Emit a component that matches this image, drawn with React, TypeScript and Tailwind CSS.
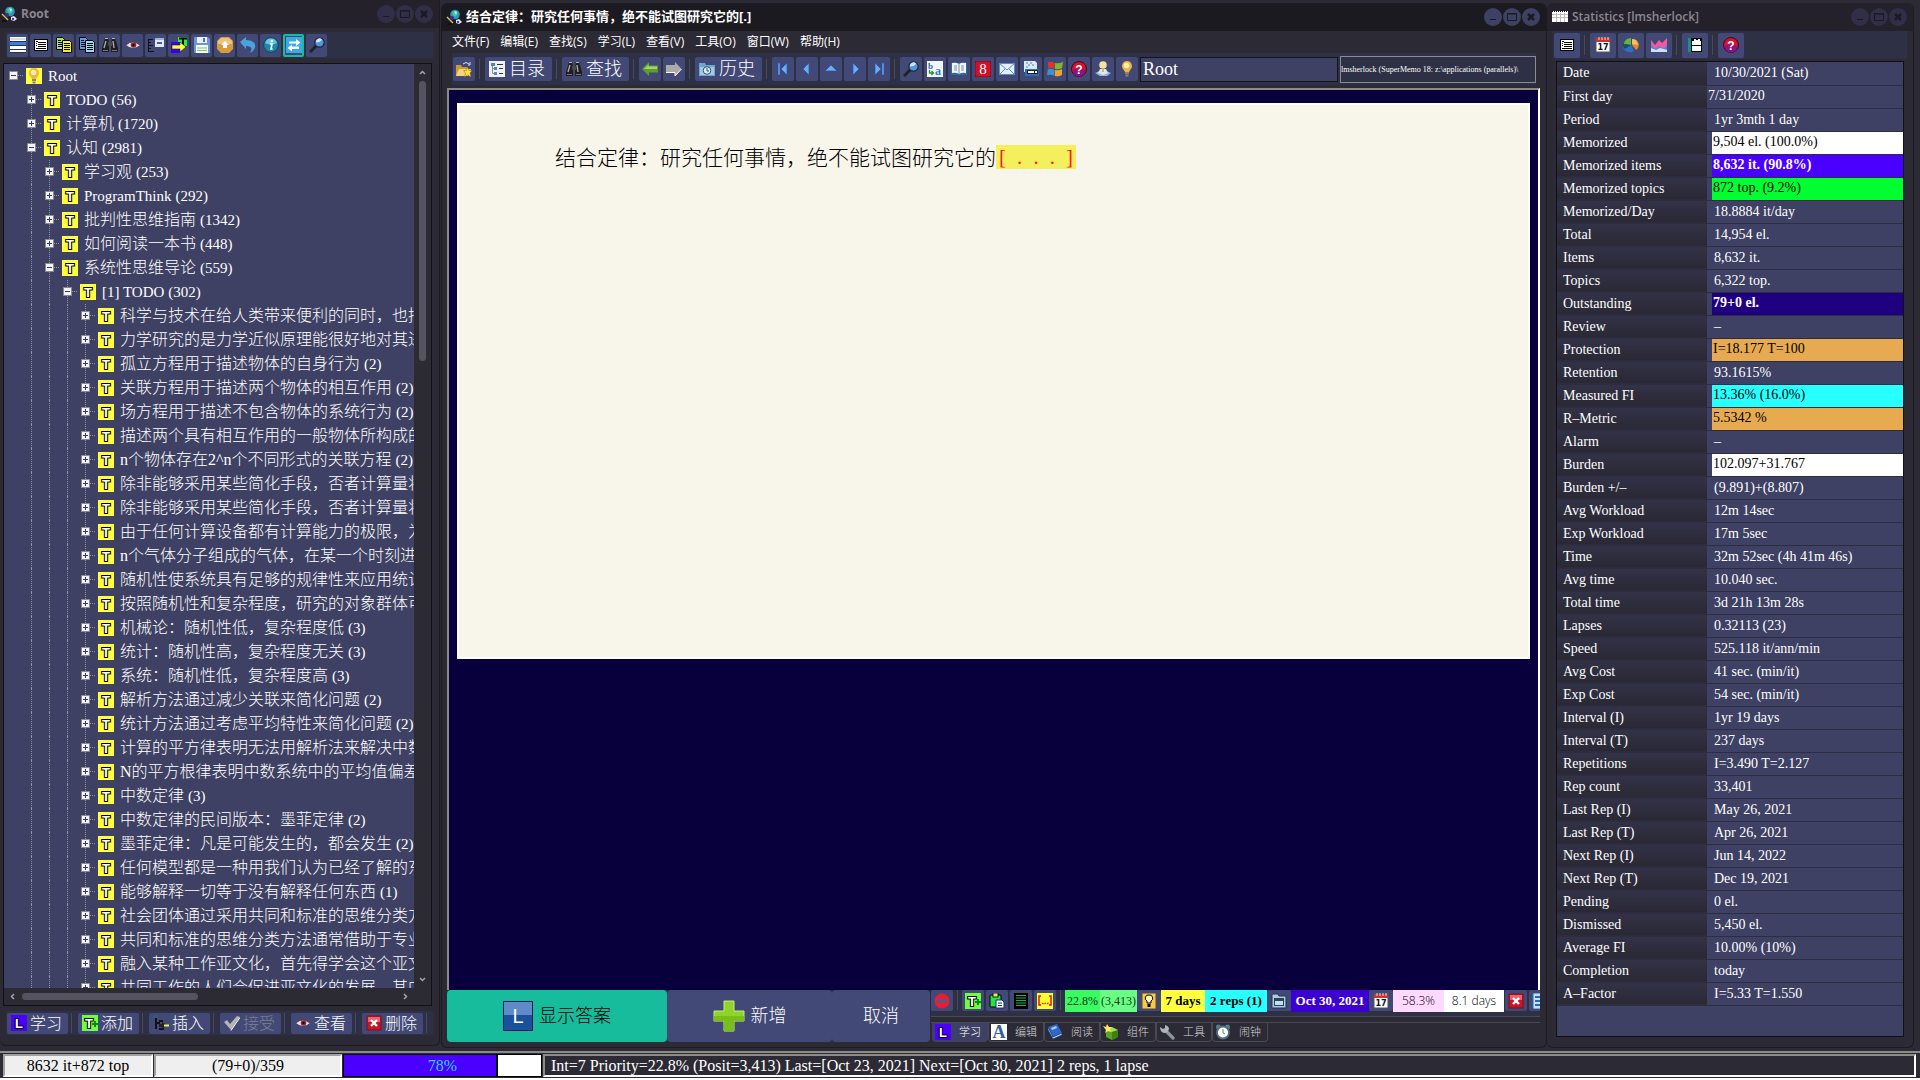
import React from 'react';
import clsx from 'clsx';

const SERIF = "font-['Liberation_Serif','Noto_Sans_CJK_SC',serif]";
const SANS = "font-['Open_Sans','Noto_Sans_CJK_SC',sans-serif]";

/*icons*/
const Svg = (props: { size?: number, children: React.ReactNode }) => (
    <svg width={props.size ?? 16} height={props.size ?? 16} viewBox="0 0 16 16" className="shrink-0" aria-hidden="true">
        {props.children}
    </svg>
);

const Letter = (props: { ch: string, bg: string, plus?: boolean }) => <Svg>
    <rect width="16" height="16" fill={props.bg}/>
    <text x={props.plus ? 7 : 8} y="12.6" textAnchor="middle" fontSize="13" fontWeight="bold"
          fontFamily="Liberation Sans, sans-serif" fill="#fff" stroke="#000" strokeWidth="2.2"
          paintOrder="stroke">{props.ch}</text>
    {props.plus && <path d="M13 6v6M10 9h6" stroke="#0a8a1a" strokeWidth="2"/>}
</Svg>;

const IconLogo = () => <Svg>
    <path d="M1 15h5M2 9l5 5" stroke="#111" strokeWidth="2"/>
    <path d="M1 8l6 6" stroke="#d9c94a" strokeWidth="1.4"/>
    <circle cx="9" cy="5.5" r="4.8" fill="#2a9bb5"/>
    <path d="M6 3l4-1 2 3-3 3-2-2z" fill="#43c59e"/>
    <path d="M8 2l3 1-1 3z" fill="#d8f0f4"/>
    <circle cx="6" cy="9" r="2" fill="#3b2b9a"/>
    <path d="M10 11l3-1 3 3-3 2-3-1z" fill="#eee"/>
    <circle cx="12" cy="13" r="1.3" fill="#3a3ae0"/>
</Svg>;

const IconRows = () => <Svg>
    <rect width="16" height="16" fill="#fff"/>
    <rect y="5" width="16" height="3" fill="#3f7be0"/>
    <path d="M0 4.5h16M0 8.5h16M0 12.5h16M0 15.5h16" stroke="#28324f"/>
    <rect y="1" width="16" height="2" fill="#cfdcf4"/>
</Svg>;

const IconDoc = () => <Svg>
    <rect x="1.5" y="2.5" width="13" height="11" fill="#fff" stroke="#000"/>
    <path d="M3 4.5h2M5 5.5h8M5 7.5h8M5 9.5h8M3 11.5h10M3 6.5h1M3 8.5h1" stroke="#000"/>
</Svg>;

const IconDocs = (props: { a: string, b: string }) => <Svg>
    <path d="M.5 .5h6l2 2v10h-8z" fill={props.a} stroke="#000"/>
    <path d="M2 3.5h3M2 5.5h4M2 7.5h4M2 9.5h4" stroke="#000"/>
    <path d="M6.5 3.5h7l2 2v10h-9z" fill={props.b} stroke="#000"/>
    <path d="M8 6.5h6M8 8.5h6M8 10.5h6M8 12.5h6" stroke="#000"/>
</Svg>;

const IconBinoculars = () => <Svg>
    <path d="M3 1h3l1 4v10H0v-4z" fill="#1e1e1e"/>
    <path d="M13 1h-3L9 5v10h7v-4z" fill="#1e1e1e"/>
    <rect x="6" y="5" width="4" height="4" fill="#4a4a4a"/>
    <path d="M4 4l-2 7M11 4l1 7" stroke="#a8a8a8" strokeWidth="1.4"/>
    <path d="M3 1.5h3M10 1.5h3" stroke="#b5b5b5"/>
    <path d="M1 13.5h5M10 13.5h5" stroke="#777"/>
</Svg>;

const IconEye = () => <Svg>
    <path d="M1 8q6-6 14 0q-7 6-14 0z" fill="#e8e2e0"/>
    <path d="M1 8q6-6 14 0" stroke="#6a3d44" fill="none"/>
    <circle cx="8.5" cy="8" r="2.8" fill="#8c2d3c"/>
    <circle cx="8.5" cy="8" r="1.2" fill="#1a0509"/>
</Svg>;

const IconTreeWin = () => <Svg>
    <path d="M0 2.5h5M0 5.5h3M0 8.5h5M0 11.5h3M0 14.5h6M.5 2v12" stroke="#111" fill="none"/>
    <rect x="7" y="1" width="9" height="9" fill="#dfe6f5"/>
    <rect x="7" y="1" width="9" height="2" fill="#9db2dd"/>
    <path d="M9 6h5" stroke="#223" strokeWidth="1.4"/>
</Svg>;

const IconImportT = () => <Svg>
    <rect x="7" y="0" width="9" height="9" fill="#23ef3c"/>
    <path d="M8 1.5h8M12 1v7" stroke="#000" strokeWidth="2"/>
    <rect x="0" y="5" width="9" height="11" fill="#3b00f0"/>
    <path d="M1 8h8V5l6 5-6 5v-3H1z" fill="#ffff30" stroke="#222" strokeWidth=".6"/>
</Svg>;

const IconFloppy = () => <Svg>
    <path d="M0 0h14l2 2v14H0z" fill="#6b93d6"/>
    <rect x="3" y="0" width="10" height="6" fill="#e9f0fb"/>
    <rect x="9" y="1" width="2" height="4" fill="#4c70b5"/>
    <rect x="2" y="8" width="12" height="8" fill="#f4fbf0"/>
    <path d="M3 11h10M3 13.5h10" stroke="#7cc66a"/>
</Svg>;

const IconUp = () => <Svg>
    <path d="M4 0h8l4 4v8l-4 4H4l-4-4V4z" fill="#d79b3e"/>
    <path d="M4 1h8l3 3v3H1V4z" fill="#edc27a"/>
    <path d="M8 4l4 4h-2v3H6V8H4z" fill="#fff"/>
</Svg>;

const IconUndo = () => <Svg>
    <path d="M0 5l6-5v3c6 0 10 3 9 7-.5 3-3 5-5 6 2-3 3-7-4-7v3z" fill="#4aa3dd"/>
</Svg>;

const IconInfo = () => <Svg>
    <circle cx="8" cy="8" r="7.4" fill="#1f86a8" stroke="#0e4560"/>
    <path d="M2 6a6.3 6.3 0 0 1 12 0q-6 3-12 0z" fill="#6cc4dc"/>
    <circle cx="8.8" cy="4" r="1.2" fill="#fff"/>
    <path d="M7 7h2l-1 5h1.6" stroke="#fff" strokeWidth="1.6" fill="none"/>
</Svg>;

const IconSwap = () => <Svg>
    <rect width="16" height="16" fill="#3aa9e6"/>
    <path d="M3 4.5h7V2l4.500 3.500L10 9V6.500H3z" fill="#fff"/>
    <path d="M13 9.500H6V7.500L1.500 11 6 14.500V12h7z" fill="#fff"/>
</Svg>;

const IconZoom = () => <Svg>
    <path d="M1 15l6-6" stroke="#222" strokeWidth="3"/>
    <circle cx="10.5" cy="5.5" r="4.7" fill="#4f97dc" stroke="#1d2433" strokeWidth="1.2"/>
    <path d="M7 5.5a3.500 3.500 0 0 1 6-3q-1 3-6 3z" fill="#cfe6fb"/>
</Svg>;

const IconBulb = (props: { bg?: string }) => <Svg>
    {props.bg && <rect width="16" height="16" fill={props.bg}/>}
    <path d="M8 0a5 5 0 0 1 3.500 8.500L10 11H6L4.500 8.500A5 5 0 0 1 8 0z" fill="#efb73e"/>
    <circle cx="7.5" cy="4.5" r="2.8" fill="#fff0b0"/>
    <path d="M6 12h4M6.5 14.500h3" stroke="#8b8470" strokeWidth="1.8"/>
</Svg>;

const IconInsert = () => <Svg>
    <path d="M3 2v12M3 8h4" stroke="#111" strokeWidth="2"/>
    <rect x="0" y="0" width="5" height="3" fill="#36577e"/>
    <path d="M6 6h4M6 14h5" stroke="#111" strokeWidth="2"/>
    <path d="M6 9h3V7l5 3.500-5 3V12H6z" fill="#222"/>
    <path d="M11 10.500h5" stroke="#f0f060" strokeWidth="2"/>
</Svg>;

const IconCheck = () => <Svg>
    <path d="M0 7l3-2 3 4 7-8 3 1-9 13z" fill="#b5b5b5"/>
    <path d="M7 15.500l9-13" stroke="#fff"/>
</Svg>;

const IconRedX = () => <Svg>
    <rect x="1" y="1" width="14" height="14" fill="#c81525" stroke="#8a0c18"/>
    <rect x="2" y="2" width="12" height="5" fill="#e56570"/>
    <path d="M5 5l6 6M11 5l-6 6" stroke="#fff" strokeWidth="2.4"/>
</Svg>;

const IconFolderStar = () => <Svg>
    <path d="M0 4h5l1 2h6v9H0z" fill="#c99a35"/>
    <path d="M3 8h12l-3 7H0z" fill="#f6d577"/>
    <path d="M7 3q3-3 6 0M12 4h2V1" stroke="#dde" fill="none"/>
    <path d="M11.500 6l1.500 3.500H16l-2 2.500 1 4-3.500-2-3 2L9.500 12 7.500 9.500h3z" fill="#ffe23a" stroke="#8a6a10" strokeWidth=".5"/>
</Svg>;

const IconContents = () => <Svg>
    <rect width="16" height="16" fill="#eef1f4"/>
    <path d="M2 2h4v3H2zM5 6h3v3H5zM5 11h3v3H5z" fill="#4f86b8"/>
    <path d="M8 3.500h6M10 7.500h4M10 12.500h4" stroke="#333"/>
    <path d="M3.500 5v7.500h2M3.500 7.500h2" stroke="#888" fill="none"/>
</Svg>;

const IconArrow = (props: { right?: boolean }) => <Svg>
    {props.right
        ? <>
            <path d="M0 4h9V1l6.500 7L9 15v-4H0z" fill="#ababab"/>
            <path d="M0 11.500h9V15l6.500-7" stroke="#fff" fill="none"/>
        </>
        : <>
            <path d="M16 4.500H7V1L0 8l7 7v-3.500h9z" fill="#5aa02c"/>
            <path d="M15 5.500H6.500V3.500L2 8h13z" fill="#a2d66d"/>
        </>}
</Svg>;

const IconClockFolder = () => <Svg>
    <path d="M0 2h6l1 2h9v11H0z" fill="#6fa6cc"/>
    <rect x="1" y="6" width="14" height="8" fill="#a4cbe3"/>
    <circle cx="8" cy="9.5" r="3.8" fill="#dceaf3" stroke="#2c5474"/>
    <path d="M8 7v3h2" stroke="#2c5474" fill="none"/>
</Svg>;

const NAV_PATHS: Record<string, string> = {
    first: "M3 2h2v12H3zM12 2v12L6 8z",
    prev: "M10 2v12L4 8z",
    up: "M8 4l6 6H2z",
    next: "M6 2v12l6-6z",
    last: "M11 2h2v12h-2zM4 2v12l6-6z",
};

const IconNav = (props: { to: string }) => <Svg>
    <path d={NAV_PATHS[props.to]} fill="#6fabf2" stroke="#2458b4" strokeWidth=".7"/>
</Svg>;

const IconTranslate = () => <Svg>
    <rect width="16" height="16" fill="#f2f6fa"/>
    <text x="1" y="8" fontSize="9" fontWeight="bold" fontFamily="Liberation Serif" fill="#2b6ea8">b</text>
    <text x="8" y="14" fontSize="12" fontWeight="bold" fontFamily="Liberation Serif" fill="#2b7fc4">a</text>
    <path d="M2.500 9v3h4M4.500 10l2 2-2 2" stroke="#23902b" strokeWidth="1.3" fill="none"/>
</Svg>;

const IconBook = () => <Svg>
    <path d="M0 2h16v12H9l-1 1-1-1H0z" fill="#2f6a9c"/>
    <path d="M1 2q4-1 7 1 3-2 7-1v10q-4-1-7 1-3-2-7-1z" fill="#f1f5f8"/>
    <path d="M8 3v10M3 5h3M3 7h3M3 9h3M10 5h3M10 7h3M10 9h3" stroke="#7592aa"/>
</Svg>;

const IconGoogle = () => <Svg>
    <rect width="16" height="16" rx="2" fill="#d31027" stroke="#6d0a16"/>
    <text x="8" y="13" textAnchor="middle" fontSize="15" fontFamily="Liberation Serif" fill="#fff">8</text>
</Svg>;

const IconMail = () => <Svg>
    <rect x=".5" y="2.5" width="15" height="11" fill="#e3effa" stroke="#5e8cc0"/>
    <path d="M0 2l8 7 8-7M0 14l6-6M16 14l-6-6" stroke="#5e8cc0" fill="none"/>
</Svg>;

const IconFax = () => <Svg>
    <path d="M1 0h11l2 2v9H1z" fill="#dcebfa"/>
    <path d="M3 1h2v2H3zM7 1h2v2H7zM5 3h2v2H5zM9 3h2v2H9zM3 5h2v2H3z" fill="#8db8e2"/>
    <path d="M2 8h14v7H2z" fill="#2f6fab"/>
    <rect x="4" y="9" width="11" height="4" fill="#16222f"/>
    <path d="M5 11h6M12 11h2" stroke="#fff" strokeWidth="2"/>
</Svg>;

const IconWindows = () => <Svg>
    <path d="M1 1q4-1 6.500 1v6Q4 6 1 7z" fill="#d6382d"/>
    <path d="M8 2q4 1 8-1l-1 6q-3 2-7 1z" fill="#7fb52f"/>
    <path d="M1 8q3-1 6.500 1v6Q4 13 0 14z" fill="#3f8fd4"/>
    <path d="M8 9q4 1 7-1v6q-3 2-7 1z" fill="#f0a52a"/>
</Svg>;

const IconHelp = () => <Svg>
    <circle cx="8" cy="8" r="7.5" fill="#d3122e" stroke="#4a0716"/>
    <path d="M1.500 9a6.500 6.500 0 0 0 13 0q-6-2-13 0z" fill="#8a128a"/>
    <text x="8" y="12.5" textAnchor="middle" fontSize="12" fontWeight="bold" fontFamily="Liberation Sans"
          fill="#fff">?</text>
</Svg>;

const IconUser = () => <Svg>
    <path d="M0 12l5-2h6l5 2-4 3H5z" fill="#8fb7e0"/>
    <path d="M5 8h6l2 4-5 2-5-2z" fill="#dfe9f4"/>
    <circle cx="8" cy="4" r="3.8" fill="#f3e2a4"/>
    <path d="M7 7h2v4H7z" fill="#dcb64c"/>
</Svg>;

const IconStop = () => <Svg>
    <circle cx="8" cy="8" r="7.5" fill="#ea1c2d"/>
    <rect x="3" y="6.5" width="10" height="3" fill="#4a5a92"/>
</Svg>;

const IconPaste = () => <Svg>
    <rect x="1" y="2" width="11" height="12" rx="1" fill="#23e53c" stroke="#000"/>
    <rect x="4" y="0" width="5" height="4" fill="#e8e070" stroke="#000" strokeWidth=".8"/>
    <path d="M7 7h6l2 2v6H7z" fill="#fff" stroke="#102a80"/>
    <path d="M9 10h4M9 12.500h4" stroke="#102a80"/>
</Svg>;

const IconLines = () => <Svg>
    <rect x="1" width="14" height="16" fill="#000"/>
    <path d="M3 2.500h10M3 5h10M3 7.500h10M3 10h10M3 12.500h10" stroke="#1fae45"/>
</Svg>;

const IconCloze = () => <Svg>
    <rect width="16" height="16" fill="#ffff30"/>
    <path d="M4 3H2v9h2M12 3h2v9h-2M5 10.500h1.500M7.500 10.500H9M10 10.500h1.500" stroke="#e01818" strokeWidth="1.5" fill="none"/>
</Svg>;

const IconIdea = () => <Svg>
    <rect x="1" width="14" height="16" fill="#f4c94e" stroke="#6b4c10"/>
    <path d="M8 2a3.200 3.200 0 0 1 2 6v2H6V8a3.200 3.200 0 0 1 2-6z" fill="#fff6b8" stroke="#000"/>
    <path d="M8 11v3" stroke="#000" strokeWidth="3"/>
</Svg>;

const IconArchive = () => <Svg>
    <path d="M1 1h6l1 2h7v12H1z" fill="#a9cce4" stroke="#1e3448"/>
    <rect x="3" y="5" width="10" height="8" fill="#2b4459"/>
    <rect x="4" y="8" width="8" height="4" fill="#c4def0"/>
</Svg>;

const IconCalendar = () => <Svg>
    <rect x="1" y="1" width="14" height="14" fill="#fff" stroke="#555"/>
    <rect x="1" y="1" width="14" height="4" fill="#c33"/>
    <path d="M4 0v3M7 0v3M10 0v3M13 0v3" stroke="#ddd"/>
    <text x="8" y="13" textAnchor="middle" fontSize="8" fontWeight="bold" fontFamily="DejaVu Sans" fill="#111">17</text>
</Svg>;

const IconWindow = () => <Svg>
    <rect x="1" width="15" height="16" fill="#bfe0f8" stroke="#2a6ca3"/>
    <path d="M3 4h10M3 8h10M3 12h10" stroke="#2a6ca3" strokeWidth="2"/>
</Svg>;

const IconFont = () => <Svg>
    <rect width="16" height="16" fill="#fff"/>
    <text x="8" y="14" textAnchor="middle" fontSize="18" fontWeight="bold" fontFamily="Liberation Serif"
          fill="#355f96">A</text>
</Svg>;

const IconBlueBook = () => <Svg>
    <path d="M1 3l9-3 5 9-9 4z" fill="#2c69cf"/>
    <path d="M4 4l5-2 1 2-5 2z" fill="#a9cdf7"/>
    <path d="M1 3v3l5 9 9-4V9l-9 4z" fill="#d5dcec" stroke="#12388c" strokeWidth=".8"/>
</Svg>;

const IconCube = () => <Svg>
    <path d="M9 4l6 2v7l-6 3-6-3V6z" fill="#5ba621"/>
    <path d="M3 6l6 2 6-2-6-3z" fill="#a6de55"/>
    <path d="M9 8v8l6-3V6z" fill="#3f7f14"/>
    <path d="M0 2l3 1 1-3 2 3h3L7 5l1 3-3-1-3 2 1-3z" fill="#ffe86a"/>
</Svg>;

const IconWrench = () => <Svg>
    <path d="M7 7l7 7" stroke="#8e949b" strokeWidth="3.2" strokeLinecap="round"/>
    <path d="M1 3l3 2 2-1V1q4 1 4 4-1 4-5 4-4-1-4-6z" fill="#aeb4ba"/>
</Svg>;

const IconAlarm = () => <Svg>
    <circle cx="3.5" cy="3" r="2.5" fill="#5b7d8a"/>
    <circle cx="12.5" cy="3" r="2.5" fill="#5b7d8a"/>
    <circle cx="8" cy="8.5" r="6" fill="#fbfcfc" stroke="#50707c" strokeWidth="1.8"/>
    <path d="M8 5v4l2 1" stroke="#777" fill="none"/>
</Svg>;

const IconGrid = () => <Svg>
    <rect y="2" width="16" height="11" fill="#fff"/>
    <path d="M0 2.500h16" stroke="#000" strokeDasharray="1 1"/>
    <path d="M0 5.500h16M0 8.500h16M4.500 4v9M8.500 4v9M12.500 4v9" stroke="#bbb"/>
</Svg>;

const IconPie = () => <Svg>
    <path d="M8 1a7 6 0 0 0-7 6l7 1z" fill="#62b545"/>
    <path d="M0 8a7 6 0 0 0 11 6L8 8z" fill="#2f6fc4"/>
    <path d="M0 7a7 6 0 0 0 2 5l6-4z" fill="#19505a"/>
    <path d="M9 2a6 6 0 0 1 4 11L9 8z" fill="#e98624"/>
    <path d="M9 2q5 0 6 6l-6-1z" fill="#f7c06a"/>
</Svg>;

const IconArea = () => <Svg>
    <path d="M0 6l4 4 4-3 4 3 4-4v9H0z" fill="#4d86e8"/>
    <path d="M0 3l4 5 4-5 3 3 5-5v7l-4 4-4-3-4 3-4-4z" fill="#ef5a9c"/>
    <path d="M0 11l5 2 4-2 7 2v2H0z" fill="#cfe1fb"/>
</Svg>;

const IconNotebook = () => <Svg>
    <rect x="1" y="1" width="14" height="14" fill="#000"/>
    <rect x="1" y="1" width="3" height="14" fill="#1b8f8f"/>
    <path d="M5 4h2V2h2v1h2V2h2v2h1v4H5zM5 9h9v5H5z" fill="#fff"/>
</Svg>;

const IconAdd = () => <svg width="32" height="32" viewBox="0 0 32 32" className="shrink-0" aria-hidden="true">
    <path d="M11 1h10v10h10v10H21v10H11V21H1V11h10z" fill="#8fd32b" stroke="#c5ef80"/>
    <path d="M11 21H1v-5h30v5H21v10H11z" fill="#78bf1c"/>
</svg>;

const IconLearn = () => <svg width="30" height="30" viewBox="0 0 30 30" className="shrink-0" aria-hidden="true">
    <rect x=".5" y=".5" width="29" height="29" fill="#1c4f9c" stroke="#0b1c52"/>
    <rect x="1" y="1" width="28" height="13" fill="#5f8cc8"/>
    <text x="15" y="22" textAnchor="middle" fontSize="20" fontFamily="Liberation Sans" fill="#fff">L</text>
</svg>;

/*controls*/
const ToolButton = (props: { label: string, className?: string, children: React.ReactNode }) => (
    <button type="button" aria-label={props.label}
            className={clsx('flex shrink-0 items-center justify-center rounded-[2px] bg-[#434976]', props.className ?? 'w-[22px] h-6')}>
        {props.children}
    </button>
);

const Separator = (props: { className?: string }) => (
    <div className={clsx('h-5 w-px shrink-0 bg-[#4a4a55]', props.className ?? 'ml-0.5 mr-[3px]')}/>
);

const WindowButtons = (props: { active?: boolean }) => (
    <div className="ml-auto flex gap-px">
        {['Minimize', 'Maximize', 'Close'].map((kind) => (
            <button key={kind} type="button" aria-label={kind}
                    className={clsx('flex size-[18px] items-center justify-center rounded-full',
                        props.active ? 'bg-[#3e4163]' : 'bg-[#312e47]')}>
                <svg width="10" height="10" viewBox="0 0 10 10" fill="none" stroke="#1b1a22">
                    {kind == 'Minimize' && <path d="M2 7.500h6"/>}
                    {kind == 'Maximize' && <path d="M.5 1.500h9v7h-9zM0 2h10"/>}
                    {kind == 'Close' && <path d="M2 2l6 6M8 2l-6 6" strokeWidth="2.6"/>}
                </svg>
            </button>
        ))}
    </div>
);

/*contents tree*/
interface Node {
    depth: number;
    title: string;
    count?: number;
    open?: boolean;
}

const arrNodes: Node[] = [
    {depth: 0, title: 'Root', open: true},
    {depth: 1, title: 'TODO', count: 56},
    {depth: 1, title: '计算机', count: 1720},
    {depth: 1, title: '认知', count: 2981, open: true},
    {depth: 2, title: '学习观', count: 253},
    {depth: 2, title: 'ProgramThink', count: 292},
    {depth: 2, title: '批判性思维指南', count: 1342},
    {depth: 2, title: '如何阅读一本书', count: 448},
    {depth: 2, title: '系统性思维导论', count: 559, open: true},
    {depth: 3, title: '[1] TODO', count: 302, open: true},
    {depth: 4, title: '科学与技术在给人类带来便利的同时，也招'},
    {depth: 4, title: '力学研究的是力学近似原理能很好地对其进'},
    {depth: 4, title: '孤立方程用于描述物体的自身行为', count: 2},
    {depth: 4, title: '关联方程用于描述两个物体的相互作用', count: 2},
    {depth: 4, title: '场方程用于描述不包含物体的系统行为', count: 2},
    {depth: 4, title: '描述两个具有相互作用的一般物体所构成的'},
    {depth: 4, title: 'n个物体存在2^n个不同形式的关联方程', count: 2},
    {depth: 4, title: '除非能够采用某些简化手段，否者计算量将'},
    {depth: 4, title: '除非能够采用某些简化手段，否者计算量将'},
    {depth: 4, title: '由于任何计算设备都有计算能力的极限，为'},
    {depth: 4, title: 'n个气体分子组成的气体，在某一个时刻进'},
    {depth: 4, title: '随机性使系统具有足够的规律性来应用统计'},
    {depth: 4, title: '按照随机性和复杂程度，研究的对象群体可'},
    {depth: 4, title: '机械论：随机性低，复杂程度低', count: 3},
    {depth: 4, title: '统计：随机性高，复杂程度无关', count: 3},
    {depth: 4, title: '系统：随机性低，复杂程度高', count: 3},
    {depth: 4, title: '解析方法通过减少关联来简化问题', count: 2},
    {depth: 4, title: '统计方法通过考虑平均特性来简化问题', count: 2},
    {depth: 4, title: '计算的平方律表明无法用解析法来解决中数'},
    {depth: 4, title: 'N的平方根律表明中数系统中的平均值偏差'},
    {depth: 4, title: '中数定律', count: 3},
    {depth: 4, title: '中数定律的民间版本：墨菲定律', count: 2},
    {depth: 4, title: '墨菲定律：凡是可能发生的，都会发生', count: 2},
    {depth: 4, title: '任何模型都是一种用我们认为已经了解的东'},
    {depth: 4, title: '能够解释一切等于没有解释任何东西', count: 1},
    {depth: 4, title: '社会团体通过采用共同和标准的思维分类方'},
    {depth: 4, title: '共同和标准的思维分类方法通常借助于专业'},
    {depth: 4, title: '融入某种工作亚文化，首先得学会这个亚文'},
    {depth: 4, title: '共同工作的人们会促进亚文化的发展，其中'},
];

const TreeRow = ({depth, title, count, open}: Node) => (
    <li className="flex h-6 items-center whitespace-nowrap text-white">
        {Array.from({length: depth}, (_, level) => (
            <span key={level} className="flex h-full w-[18px] shrink-0 justify-center">
                {level > 0 && <span className="h-full border-l border-dotted border-[#8f90a5]"/>}
            </span>
        ))}
        <button type="button" aria-label={open ? 'Collapse' : 'Expand'} className="h-6 w-[22px] shrink-0">
            <svg width="22" height="24" viewBox="0 0 22 24" fill="none">
                {depth > 0 && <path d="M9.500 0v24" stroke="#8f90a5" strokeDasharray="1 1"/>}
                <path d="M14 11.500h6" stroke="#8f90a5" strokeDasharray="1 1"/>
                <rect x="5.5" y="7.5" width="8" height="8" fill="#f4f4f4" stroke="#8a8a8a"/>
                <path d={open ? 'M7 11.500h5' : 'M7 11.500h5M9.500 9v5'} stroke="#2c3a86"/>
            </svg>
        </button>
        {depth == 0 ? <IconBulb bg="#ffff40"/> : <Letter ch="T" bg="#ffff40"/>}
        <span className={clsx('ml-1.5 font-light', /[\u4e00-\u9fff]/.test(title) ? 'text-[16px]' : 'text-[15px]')}>{title}</span>
        {count != null && <span className="ml-1 text-[15px]">({count})</span>}
    </li>
);

const arrTreeTools: [string, React.ReactNode][] = [
    ['Rows', <IconRows/>],
    ['Document', <IconDoc/>],
    ['Copy branch', <IconDocs a="#a6f03c" b="#f6ee3a"/>],
    ['Copy tree', <IconDocs a="#45a8ec" b="#9fd8f0"/>],
    ['Find', <IconBinoculars/>],
    ['View', <IconEye/>],
    ['Structure', <IconTreeWin/>],
    ['Import', <IconImportT/>],
    ['Save', <IconFloppy/>],
    ['Parent', <IconUp/>],
    ['Undo', <IconUndo/>],
    ['Info', <IconInfo/>],
    ['Synchronize', <IconSwap/>],
    ['Zoom', <IconZoom/>],
];

const arrTreeActions: [string, React.ReactNode][] = [
    ['学习', <Letter ch="L" bg="#4a00ff"/>],
    ['添加', <Letter ch="T" bg="#6cff3c" plus/>],
    ['插入', <IconInsert/>],
    ['接受', <IconCheck/>],
    ['查看', <IconEye/>],
    ['删除', <IconRedX/>],
];

const ContentsWindow = () => (
    <section className="mb-[5px] mr-px flex w-[440px] shrink-0 flex-col rounded-b-md border-b border-r border-[#1c1b22]">
        <header className="flex h-7 shrink-0 items-center bg-[#25212b] pl-px pr-1.5">
            <IconLogo/>
            <h2 className={clsx(SANS, 'ml-1 text-[12px] font-bold text-[#8b8791]')}>Root</h2>
            <WindowButtons/>
        </header>
        <div className="mx-1.5 mt-1 flex h-[26px] shrink-0 items-center gap-0.5 bg-[#2e3045] pl-px">
            {arrTreeTools.map(([label, icon]) => (
                <ToolButton key={label} label={label}
                            className={clsx('h-[23px] w-[21px]', label == 'Synchronize' && 'outline-2 -outline-offset-2 outline-[#16bc9c]')}>
                    {icon}
                </ToolButton>
            ))}
        </div>
        <div className="ml-[3px] mr-[7px] mt-[5px] flex min-h-0 flex-1 flex-col border border-[#111016] bg-[#2c2a33]">
            <div className="flex min-h-0 flex-1">
                <ul className="min-w-0 flex-1 overflow-hidden bg-[#3e4163]">
                    {arrNodes.map((node, index) => <TreeRow key={index} {...node}/>)}
                </ul>
                {/*vertical scroll*/}
                <div className="flex w-[17px] flex-col items-center py-1">
                    <svg width="7" height="9" viewBox="0 0 7 9" fill="none" stroke="#a5a4ad" strokeWidth="1.5">
                        <path d="M1 6l2.500-2.500L6 6"/>
                    </svg>
                    <div className="mt-1 h-[280px] w-[7px] rounded-full bg-[#54535f]"/>
                    <svg className="mt-auto" width="7" height="9" viewBox="0 0 7 9" fill="none" stroke="#a5a4ad" strokeWidth="1.5">
                        <path d="M1 3l2.500 2.500L6 3"/>
                    </svg>
                </div>
            </div>
            {/*horizontal scroll*/}
            <div className="mr-[17px] flex h-[17px] shrink-0 items-center px-1">
                <svg width="9" height="9" viewBox="0 0 9 9" fill="none" stroke="#a5a4ad" strokeWidth="1.5">
                    <path d="M6 2L3.500 4.500 6 7"/>
                </svg>
                <div className="ml-[5px] h-[7px] w-[176px] rounded-full bg-[#54535f]"/>
                <svg className="ml-auto" width="9" height="9" viewBox="0 0 9 9" fill="none" stroke="#a5a4ad" strokeWidth="1.5">
                    <path d="M3 2l2.500 2.500L3 7"/>
                </svg>
            </div>
        </div>
        <div className="mx-1.5 mb-2.5 mt-[5px] flex h-6 shrink-0 items-center bg-[#2e3045] pl-px">
            {arrTreeActions.map(([label, icon]) => (
                <React.Fragment key={label}>
                    <button type="button" disabled={label == '接受'}
                            className="flex h-[21px] w-[61px] items-center gap-[3px] rounded-[2px] bg-[#434976] pl-1 text-[16px] leading-[21px] font-light text-white disabled:text-[#7d7f92]">
                        {icon}{label}
                    </button>
                    <Separator className="ml-[3px] mr-1.5"/>
                </React.Fragment>
            ))}
        </div>
    </section>
);

/*element window*/
const arrMenu = ['文件(F)', '编辑(E)', '查找(S)', '学习(L)', '查看(V)', '工具(O)', '窗口(W)', '帮助(H)'];

const arrLinks: [string, React.ReactNode][] = [
    ['Search', <IconZoom/>],
    ['Translate', <IconTranslate/>],
    ['Dictionary', <IconBook/>],
    ['Google', <IconGoogle/>],
    ['Mail', <IconMail/>],
    ['Fax', <IconFax/>],
    ['Windows', <IconWindows/>],
    ['Help', <IconHelp/>],
    ['User', <IconUser/>],
    ['Hint', <IconBulb/>],
];

const arrTabs: [string, React.ReactNode][] = [
    ['学习', <Letter ch="L" bg="#4a00ff"/>],
    ['编辑', <IconFont/>],
    ['阅读', <IconBlueBook/>],
    ['组件', <IconCube/>],
    ['工具', <IconWrench/>],
    ['闹钟', <IconAlarm/>],
];

const WideTool = (props: { label: string, children: React.ReactNode }) => (
    <button type="button"
            className="flex h-6 w-[67px] shrink-0 items-center gap-1 rounded-[2px] bg-[#434976] pl-1 text-[18px] leading-6 font-light text-white">
        {props.children}{props.label}
    </button>
);

const ElementToolbar = () => (
    <div className="ml-2.5 mr-2.5 flex h-8 shrink-0 items-center gap-0.5 bg-[#2e3045] pl-px">
        <ToolButton label="Open"><IconFolderStar/></ToolButton>
        <Separator/>
        <WideTool label="目录"><IconContents/></WideTool>
        <Separator/>
        <WideTool label="查找"><IconBinoculars/></WideTool>
        <Separator/>
        <ToolButton label="Back"><IconArrow/></ToolButton>
        <ToolButton label="Forward"><IconArrow right/></ToolButton>
        <Separator/>
        <WideTool label="历史"><IconClockFolder/></WideTool>
        <Separator/>
        {Object.keys(NAV_PATHS).map((to) => <ToolButton key={to} label={to}><IconNav to={to}/></ToolButton>)}
        <Separator/>
        {arrLinks.map(([label, icon]) => <ToolButton key={label} label={label}>{icon}</ToolButton>)}
        <input aria-label="Element title" defaultValue="Root"
               className="h-[25px] w-[198px] min-w-0 shrink border border-[#16151c] bg-[#3e4163] px-0.5 text-[18px] text-white"/>
        <div className="h-[27px] min-w-0 flex-1 overflow-hidden whitespace-nowrap border border-[#8b8a92] text-[8px] leading-[25px] text-white">
            {'lmsherlock (SuperMemo 18: z:\\applications (parallels)\\'}
        </div>
    </div>
);

const Chip = (props: { className: string, children: React.ReactNode }) => (
    <span className={clsx('flex h-[22px] shrink-0 items-center justify-center whitespace-nowrap', props.className)}>
        {props.children}
    </span>
);

const LearningBar = () => {
    const small = 'h-[21px] w-[22px]';
    return (
        <div className="flex min-w-0 flex-1 flex-col pl-px">
            <div className="flex h-[26px] items-start overflow-hidden bg-[#2e3045]">
                <ToolButton label="Stop" className={small}><IconStop/></ToolButton>
                <Separator className="mx-1"/>
                <div className="flex gap-0.5">
                    <ToolButton label="Add topic" className={small}><Letter ch="T" bg="#6cff3c" plus/></ToolButton>
                    <ToolButton label="Paste" className={small}><IconPaste/></ToolButton>
                    <ToolButton label="Text" className={small}><IconLines/></ToolButton>
                    <ToolButton label="Cloze" className={small}><IconCloze/></ToolButton>
                </div>
                <Separator className="mx-1"/>
                <Chip className="w-[35px] bg-[#3bfa62] text-[12px] text-[#123d1a]">22.8%</Chip>
                <Chip className="w-[37px] bg-[#6aff84] text-[12px] text-[#123d1a]">(3,413)</Chip>
                <ToolButton label="Priority" className="h-[21px] w-6"><IconIdea/></ToolButton>
                <Chip className="w-11 bg-[#ffff40] text-[13px] font-bold text-black">7 days</Chip>
                <Chip className="w-[62px] bg-[#28ffff] text-[13px] font-bold text-black">2 reps (1)</Chip>
                <ToolButton label="History" className="h-[21px] w-6"><IconArchive/></ToolButton>
                <Chip className="w-[78px] bg-[#3c00d2] text-[13px] font-bold text-white">Oct 30, 2021</Chip>
                <ToolButton label="Calendar" className="h-[21px] w-6"><IconCalendar/></ToolButton>
                <Chip className={clsx(SANS, 'w-[51px] bg-[#ffd9ff] text-[12px] text-black')}>58.3%</Chip>
                <Chip className={clsx(SANS, 'w-[60px] bg-white text-[12px] text-black')}>8.1 days</Chip>
                <ToolButton label="Remove" className="ml-px h-[21px] w-[22px]"><IconRedX/></ToolButton>
                <ToolButton label="Layout" className="ml-0.5 h-[21px] w-[22px]"><IconWindow/></ToolButton>
            </div>
            <div className="h-1.5 border-t border-[#4a4a55]"/>
            <nav className="flex flex-1 items-start border-t border-[#4a4a55] pl-px">
                {arrTabs.map(([label, icon], index) => (
                    <button key={label} type="button"
                            className={clsx('flex h-[19px] w-14 items-center gap-2 rounded-b border border-t-0 pl-0.5 text-[11px] font-light leading-4',
                                index == 0 ? 'border-[#3e4163] bg-[#3e4163] text-white' : 'border-[#4a4a55] text-[#d5d5da]')}>
                        {icon}{label}
                    </button>
                ))}
            </nav>
        </div>
    );
};

const ElementWindow = () => (
    <main className="mb-[3px] mt-[3px] flex min-w-0 flex-1 flex-col rounded-md border border-t-0 border-[#1c1b22]">
        <header className="flex h-7 shrink-0 items-center rounded-t-md bg-[#1b1a20] pl-1 pr-1.5">
            <IconLogo/>
            <h1 className={clsx(SANS, 'ml-1 text-[13px] font-bold text-white')}>
                结合定律：研究任何事情，绝不能试图研究它的[.]
            </h1>
            <WindowButtons active/>
        </header>
        <nav className={clsx(SANS, 'flex h-[22px] shrink-0 items-center gap-[11px] pl-2.5 text-[12px] leading-4 text-white')}>
            {arrMenu.map((item) => <button key={item} type="button">{item}</button>)}
        </nav>
        <ElementToolbar/>

        <div className="ml-[5px] mr-1.5 mt-[3px] flex min-h-0 flex-1 flex-col border-2 border-b-0 border-l-[#8d8b86] border-r-white border-t-[#8d8b86] bg-[#08003c] px-2 pt-[13px]">
            <article className="min-h-0 flex-[5] overflow-hidden border-2 border-white bg-[#f8f5ea]">
                <p className="px-24 py-10 text-[21px] leading-[26px] font-light text-black">
                    结合定律：研究任何事情，绝不能试图研究它的
                    <span className="inline-flex h-6 w-20 items-center justify-between bg-[#f3ef5d] px-[3px] align-top text-[21px] font-normal text-[#ff1e10]">
                        <span>[</span><span>.</span><span>.</span><span>.</span><span>]</span>
                    </span>
                </p>
            </article>
            <div className="min-h-0 flex-[3]"/>
        </div>

        <div className="mb-[5px] ml-[5px] mr-1.5 flex h-[52px] shrink-0 text-[18px] font-light">
            <button type="button"
                    className="flex w-[220px] shrink-0 items-center justify-center gap-1.5 rounded bg-[#16bc9c] text-black">
                <IconLearn/>显示答案
            </button>
            <button type="button"
                    className="flex w-[165px] shrink-0 items-center justify-center gap-1.5 rounded bg-[#434976] text-white">
                <IconAdd/>新增
            </button>
            <button type="button" className="w-[98px] shrink-0 rounded bg-[#434976] text-white">取消</button>
            <LearningBar/>
        </div>
    </main>
);

/*statistics*/
const arrStats: [string, string, string?][] = [
    ['Date', '10/30/2021 (Sat)'],
    ['First day', '7/31/2020'],
    ['Period', '1yr 3mth 1 day'],
    ['Memorized', '9,504 el. (100.0%)', 'bg-white text-black'],
    ['Memorized items', '8,632 it. (90.8%)', 'bg-[#4a00ff] text-white font-bold'],
    ['Memorized topics', '872 top. (9.2%)', 'bg-[#00ff30] text-black'],
    ['Memorized/Day', '18.8884 it/day'],
    ['Total', '14,954 el.'],
    ['Items', '8,632 it.'],
    ['Topics', '6,322 top.'],
    ['Outstanding', '79+0 el.', 'bg-[#1e0080] text-white font-bold'],
    ['Review', '–'],
    ['Protection', 'I=18.177 T=100', 'bg-[#e8aa50] text-black'],
    ['Retention', '93.1615%'],
    ['Measured FI', '13.36% (16.0%)', 'bg-[#28ffff] text-black'],
    ['R–Metric', '5.5342 %', 'bg-[#e8aa50] text-black'],
    ['Alarm', '–'],
    ['Burden', '102.097+31.767', 'bg-white text-black'],
    ['Burden +/–', '(9.891)+(8.807)'],
    ['Avg Workload', '12m 14sec'],
    ['Exp Workload', '17m 5sec'],
    ['Time', '32m 52sec (4h 41m 46s)'],
    ['Avg time', '10.040 sec.'],
    ['Total time', '3d 21h 13m 28s'],
    ['Lapses', '0.32113 (23)'],
    ['Speed', '525.118 it/ann/min'],
    ['Avg Cost', '41 sec. (min/it)'],
    ['Exp Cost', '54 sec. (min/it)'],
    ['Interval (I)', '1yr 19 days'],
    ['Interval (T)', '237 days'],
    ['Repetitions', 'I=3.490 T=2.127'],
    ['Rep count', '33,401'],
    ['Last Rep (I)', 'May 26, 2021'],
    ['Last Rep (T)', 'Apr 26, 2021'],
    ['Next Rep (I)', 'Jun 14, 2022'],
    ['Next Rep (T)', 'Dec 19, 2021'],
    ['Pending', '0 el.'],
    ['Dismissed', '5,450 el.'],
    ['Average FI', '10.00% (10%)'],
    ['Completion', 'today'],
    ['A–Factor', 'I=5.33 T=1.550'],
];

const StatisticsWindow = () => {
    const wide = 'h-[25px] w-[26px]';
    return (
        <aside className="mb-[3px] mr-1.5 mt-[3px] flex w-[367px] shrink-0 flex-col rounded-md border border-l-0 border-t-0 border-[#1c1b22]">
            <header className="flex h-7 shrink-0 items-center rounded-t-md bg-[#25212b] pl-[5px] pr-1.5">
                <IconGrid/>
                <h2 className={clsx(SANS, 'ml-1 text-[12px] font-semibold text-[#8b8791]')}>Statistics [lmsherlock]</h2>
                <WindowButtons/>
            </header>
            <div className="mx-1.5 flex h-7 shrink-0 items-center gap-0.5 bg-[#2e3045] pl-px">
                <ToolButton label="List" className={wide}><IconDoc/></ToolButton>
                <Separator/>
                <ToolButton label="Calendar" className={wide}><IconCalendar/></ToolButton>
                <ToolButton label="Chart" className={wide}><IconPie/></ToolButton>
                <ToolButton label="Graph" className={wide}><IconArea/></ToolButton>
                <Separator/>
                <ToolButton label="Log" className={wide}><IconNotebook/></ToolButton>
                <Separator/>
                <ToolButton label="Help" className={wide}><IconHelp/></ToolButton>
            </div>
            <div className="mb-2.5 ml-[9px] mr-[9px] mt-0.5 min-h-0 flex-1 overflow-hidden border border-[#111016] bg-[#3e4163]">
                <table className="w-full table-fixed border-collapse text-left text-[14px] leading-[22px] text-white">
                    <tbody>
                    {arrStats.map(([name, value, tone]) => (
                        <tr key={name} className="h-[23px] border-b border-[#2d2c40]">
                            <th className="w-[150px] bg-linear-to-b from-[#323248] to-[#2a2833] py-0 pl-1.5 font-normal">{name}</th>
                            <td className={clsx('py-0', name == 'First day' ? 'pl-0' : 'pl-[5px]')}>
                                <div className={clsx('h-[22px]', tone ?? 'pl-0.5', (tone || name == 'First day') && 'pl-px leading-5')}>{value}</div>
                            </td>
                        </tr>
                    ))}
                    </tbody>
                </table>
            </div>
        </aside>
    );
};

const StatusBar = () => (
    <footer className="flex h-[29px] shrink-0 gap-px border-b-2 border-t-2 border-b-white border-t-[#8d8b86] bg-[#2c2a35] pl-[3px] pr-1 text-[16px] leading-[22px]">
        <div className="my-px w-[150px] shrink-0 border-2 border-b-white border-l-[#a0a0a0] border-r-white border-t-[#a0a0a0] bg-[#efefef] text-center leading-[19px] text-black">
            8632 it+872 top
        </div>
        <div className="my-px w-[188px] shrink-0 border-2 border-b-white border-l-[#a0a0a0] border-r-white border-t-[#a0a0a0] bg-[#efefef] text-center leading-[19px] text-black">
            (79+0)/359
        </div>
        <div className="relative my-px flex w-[199px] shrink-0 border border-black bg-white">
            <div className="w-[78%] border-r-2 border-black bg-[#4a00ff]"/>
            <span className="absolute inset-0 text-center leading-[21px] text-[#28d8ff]">78%</span>
        </div>
        <div className="my-px min-w-0 flex-1 overflow-hidden whitespace-nowrap border-2 border-b-white border-l-[#8d8b86] border-r-white border-t-[#8d8b86] pl-1.5 leading-[19px] text-white">
            Int=7 Priority=22.8% (Posit=3,413) Last=[Oct 23, 2021] Next=[Oct 30, 2021] 2 reps, 1 lapse
        </div>
    </footer>
);

export default function App() {
    return (
        <div className={clsx(SERIF, 'flex h-screen min-h-0 flex-col overflow-hidden bg-[#2c2a35]')}>
            <div className="flex min-h-0 flex-1">
                <ContentsWindow/>
                <ElementWindow/>
                <StatisticsWindow/>
            </div>
            <StatusBar/>
        </div>
    );
}
